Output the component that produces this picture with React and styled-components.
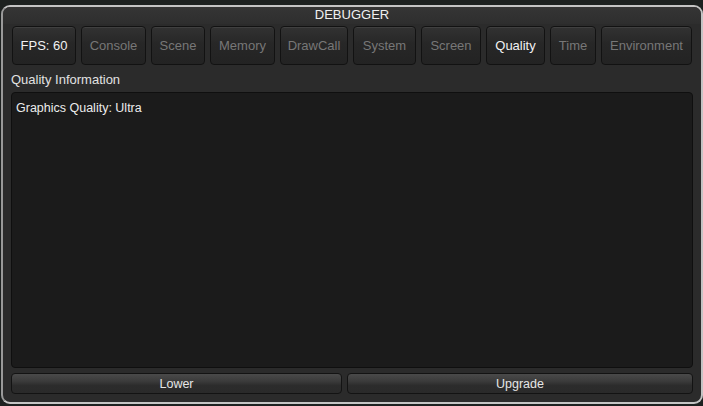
import React from "react";
import styled, { createGlobalStyle } from "styled-components";

const GlobalStyle = createGlobalStyle`
  html, body {
    margin: 0;
    padding: 0;
    background: #1d2120;
    font-family: "Liberation Sans", Arial, sans-serif;
  }
`;

const Screen = styled.div`
  width: 703px;
  height: 406px;
  box-sizing: border-box;
  padding: 5px 2px 2px 1px;
  display: flex;
`;

const Window = styled.div`
  flex: 1;
  display: flex;
  flex-direction: column;
  background: #2b2b2b;
  border: 2px solid #c4c4c4;
  border-left-color: #9a9a9a;
  border-radius: 9px;
  padding: 0 8px 8px 8px;
  box-sizing: border-box;
`;

const TitleBar = styled.div`
  height: 17px;
  line-height: 15px;
  text-align: center;
  color: #f0f0f0;
  font-size: 13px;
  margin: 0 -8px;
  background: linear-gradient(#353535, #2e2e2e);
  border-radius: 7px 7px 0 0;
`;

const TabRow = styled.div`
  display: flex;
  gap: 5px;
  margin-top: 2px;
  height: 39px;
  padding: 0 1px;
`;

const Tab = styled.div`
  flex: ${(p) => p.$w} 0 auto;
  width: ${(p) => p.$w}px;
  display: flex;
  align-items: center;
  justify-content: center;
  box-sizing: border-box;
  border: 1px solid #121212;
  border-radius: 4px;
  background: linear-gradient(#323232, #272727 45%, #232323);
  box-shadow: inset 0 1px 0 rgba(255, 255, 255, 0.07);
  color: ${(p) => (p.$active ? "#f2f2f2" : "#777777")};
  font-size: 13px;
`;

const Label = styled.div`
  color: #e2e2e2;
  font-size: 13px;
  margin: 7px 0 0 0;
  height: 20px;
`;

const InfoBox = styled.div`
  flex: 1;
  background: #1b1b1b;
  border: 1px solid #0f0f0f;
  border-radius: 4px;
  padding: 8px 4px;
  color: #ececec;
  font-size: 12.5px;
`;

const ButtonRow = styled.div`
  display: flex;
  gap: 5px;
  margin-top: 5px;
  height: 21px;
`;

const Button = styled.div`
  flex: ${(p) => p.$w} 0 0;
  display: flex;
  align-items: center;
  justify-content: center;
  box-sizing: border-box;
  border: 1px solid #131313;
  border-radius: 4px;
  background: linear-gradient(#4a4a4a, #3a3a3a 40%, #2c2c2c 60%, #2a2a2a);
  color: #e6e6e6;
  font-size: 12.5px;
`;

const tabs = [
  ["FPS: 60", 64, true],
  ["Console", 65],
  ["Scene", 54],
  ["Memory", 65],
  ["DrawCall", 68],
  ["System", 63],
  ["Screen", 60],
  ["Quality", 59, true],
  ["Time", 46],
  ["Environment", 91],
];

export default function App() {
  return (
    <>
      <GlobalStyle />
      <Screen>
        <Window>
          <TitleBar>DEBUGGER</TitleBar>
          <TabRow>
            {tabs.map(([name, w, active]) => (
              <Tab key={name} $w={w} $active={active}>
                {name}
              </Tab>
            ))}
          </TabRow>
          <Label>Quality Information</Label>
          <InfoBox>Graphics Quality: Ultra</InfoBox>
          <ButtonRow>
            <Button $w={330}>Lower</Button>
            <Button $w={345}>Upgrade</Button>
          </ButtonRow>
        </Window>
      </Screen>
    </>
  );
}
